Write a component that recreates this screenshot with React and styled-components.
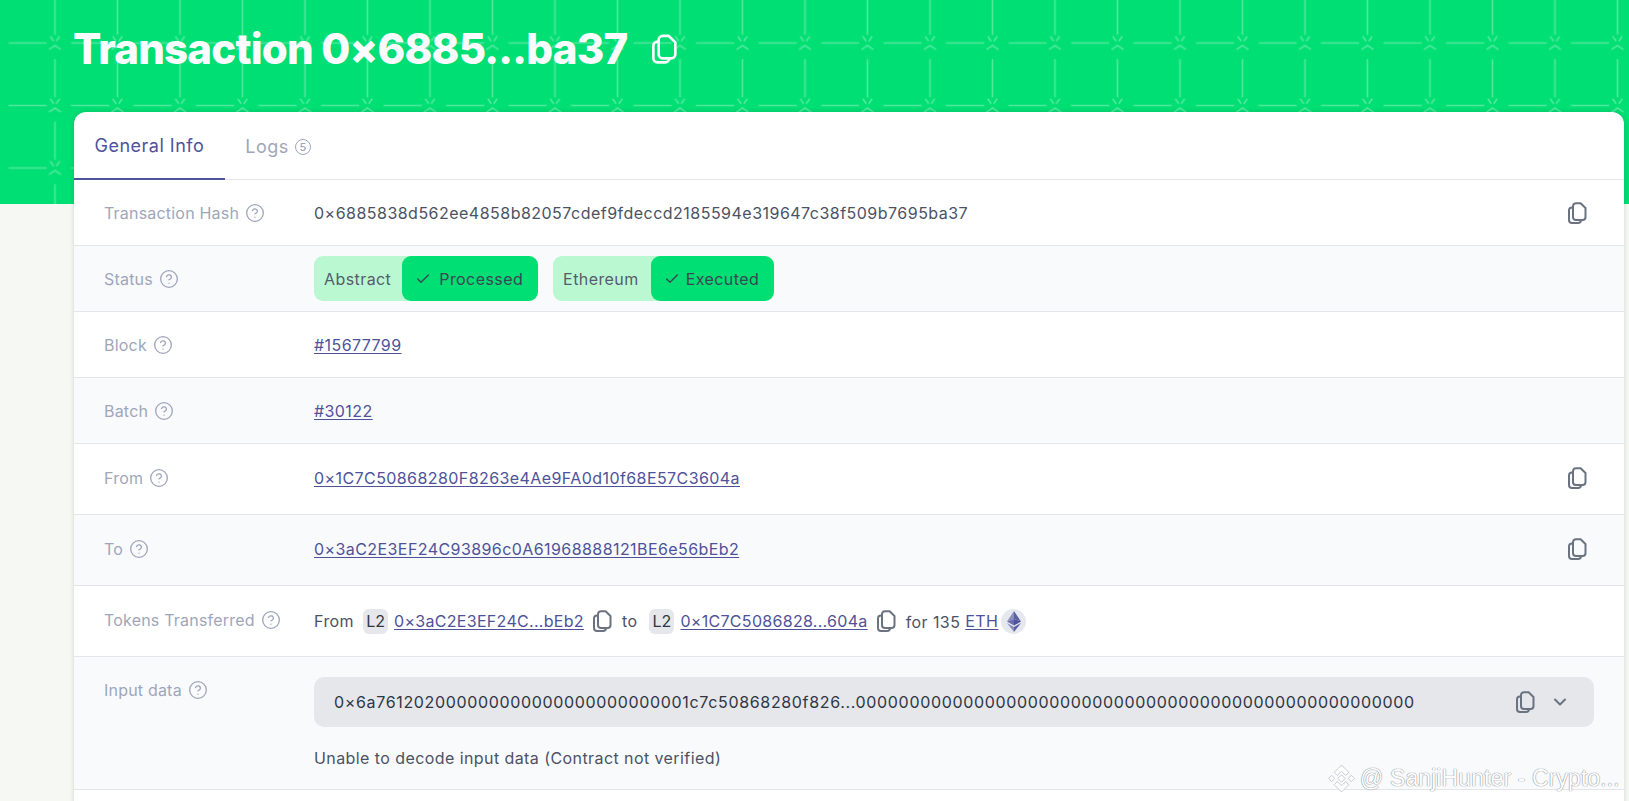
import React from "react";
import styled, { createGlobalStyle } from "styled-components";
import { CircleHelp, Check, ChevronDown } from "lucide-react";

const Global = createGlobalStyle`
  html, body { margin: 0; padding: 0; height: 100%; overflow: hidden; background: #f6f9f3; }
  body { font-family: Inter, "Noto Sans", sans-serif; }
  * { box-sizing: border-box; }
`;

const Page = styled.div`
  position: relative;
  height: 801px;
  overflow: hidden;
`;
const Hero = styled.header`
  position: relative;
  height: 204px;
  background: #00df73;
  padding: 21px 0 0 73px;
`;
const PatternLayer = styled.svg`
  position: absolute;
  inset: 0;
  width: 100%;
  height: 100%;
`;
const TitleRow = styled.div`
  position: relative;
  display: flex;
  align-items: center;
  gap: 21px;
  height: 56px;
`;
const Title = styled.h1`
  margin: 0;
  font-size: 42px;
  line-height: 56px;
  font-weight: 800;
  letter-spacing: -0.8px;
  color: #fbfbff;
`;
const Card = styled.main`
  position: relative;
  min-height: 700px;
  margin: -92px 5px 0 74px;
  background: #fff;
  border-radius: 12px 12px 0 0;
  box-shadow: 0 0 4px rgba(60, 70, 80, 0.22);
  color: #4b5263;
  font-size: 16px;
  letter-spacing: 0.42px;
`;
const Tabs = styled.nav`
  display: flex;
  height: 68px;
  border-bottom: 1px solid #e3e5e9;
`;
const Tab = styled.div`
  display: flex;
  align-items: center;
  gap: 6px;
  height: 68px;
  padding: 0 20.5px;
  font-size: 18px;
  letter-spacing: 0.5px;
  color: ${p => (p.$active ? "#4e529a" : "#a0a6ba")};
  border-bottom: ${p => (p.$active ? "2px solid #4e529a" : "none")};
`;
const Badge = styled.span`
  display: inline-flex;
  align-items: center;
  justify-content: center;
  width: 16px;
  height: 16px;
  margin-top: 1px;
  border: 1.5px solid #a0a6ba;
  border-radius: 50%;
  font-size: 11px;
  font-weight: 500;
  letter-spacing: 0;
`;
const Row = styled.div`
  display: grid;
  grid-template-columns: 240px 1fr auto;
  align-items: ${p => (p.$top ? "start" : "center")};
  height: ${p => p.$h || 66}px;
  padding: ${p => (p.$top ? "20px 0 0" : p.$h ? "0 0 3px" : "0")};
  background: ${p => (p.$alt ? "#f9fafc" : "#fff")};
  border-bottom: 1px solid #e3e5e9;
`;
const Label = styled.div`
  display: flex;
  align-items: center;
  gap: 6px;
  padding-left: 30px;
  margin-top: ${p => p.$drop || 0}px;
  color: #a0a6ba;
  line-height: 24px;
  letter-spacing: 0.2px;
`;
const Value = styled.div`
  display: flex;
  align-items: center;
  min-width: 0;
  color: #4b5263;
  letter-spacing: ${p => (p.$hash ? "0.48px" : "inherit")};
  margin-top: ${p => p.$drop || 0}px;
`;
const Link = styled.a`
  color: #4e529a;
  text-decoration: underline;
  text-underline-offset: 2px;
  letter-spacing: ${p => (p.$tight ? "0.3px" : "inherit")};
`;
const CopyBtn = styled.span`
  display: inline-flex;
  color: ${p => (p.$light ? "#fbfbff" : "#6b7280")};
  margin: 0 ${p => p.$mr || 0}px 0 ${p => p.$ml || 0}px;
`;
const Status = styled.div`
  display: flex;
  height: 45px;
  margin-right: 15px;
  border-radius: 9px;
  background: #baf8d2;
  color: #555c6d;
  align-items: center;
  padding-left: 10px;
`;
const StatusInner = styled.div`
  display: flex;
  align-items: center;
  height: 45px;
  margin-left: ${p => p.$ml}px;
  padding: 0 15px 0 13px;
  gap: ${p => p.$gap}px;
  background: #00df73;
  border-radius: 9px;
  color: #3d4453;
`;
const Layer = styled.span`
  display: inline-flex;
  align-items: center;
  justify-content: center;
  width: 25px;
  height: 25px;
  margin: 0 6px 0 ${p => p.$ml}px;
  background: #e5e7eb;
  border-radius: 6px;
  color: #2f3644;
  letter-spacing: 0;
`;
const Word = styled.span`
  margin: ${p => p.$m || "0"};
`;
const EthCoin = styled.span`
  display: inline-flex;
  align-items: center;
  justify-content: center;
  width: 25px;
  height: 25px;
  margin-left: 3px;
  border-radius: 50%;
  background: #e6e8ef;
`;
const InputColumn = styled.div`
  display: flex;
  flex-direction: column;
  margin-right: 30px;
`;
const InputBox = styled.div`
  display: flex;
  align-items: center;
  justify-content: space-between;
  height: 50px;
  padding: 0 24px 0 20px;
  background: #e5e7eb;
  border-radius: 10px;
  color: #2f3644;
  letter-spacing: 0.66px;
`;
const InputIcons = styled.div`
  display: flex;
  align-items: center;
  gap: 13px;
  color: #6b7280;
`;
const Note = styled.p`
  margin: 19px 0 0;
  line-height: 24px;
  color: #4b5263;
`;
const Watermark = styled.div`
  position: absolute;
  left: 1327px;
  top: 764px;
  display: flex;
  align-items: center;
  gap: 4px;
  font-family: "Liberation Sans", sans-serif;
  font-size: 23px;
  letter-spacing: 0.1px;
  color: #fff;
  text-shadow: 0 0 1px #70757f, 0 0 1px #9a9ea6;
  white-space: nowrap;
`;

const Copy = ({ size = 24, sw = 2 }) => (
  <svg width={size} height={size} viewBox="0 0 24 24" fill="none" stroke="currentColor" strokeWidth={sw} strokeLinecap="round" strokeLinejoin="round">
    <path d="M8 5.2a3 3 0 0 1 3-3h4.6L20.5 7v9a3 3 0 0 1-3 3H11a3 3 0 0 1-3-3z" />
    <path d="M8 6.5H7a3 3 0 0 0-3 3V19a3 3 0 0 0 3 3h6a3 3 0 0 0 3-3" />
  </svg>
);
const Help = () => <CircleHelp size={20} strokeWidth={1.6} color="#a0a6ba" />;

const Pattern = () => (
  <PatternLayer aria-hidden="true">
    <defs>
      <pattern id="grid" x="23.75" y="11.75" width="62.5" height="62.5" patternUnits="userSpaceOnUse">
        <g stroke="#4ee89d" strokeWidth="1.6" fill="none">
          <path d="M47.25 31.25H62.5M0 31.25H23" />
          <path d="M31.25 47.25V62.5M31.25 0V23" />
          <path d="M26.5 24.5L30 29.5M36 24.5L32.5 29.5" />
          <path d="M25.25 37.75L31.25 33.75L37.25 37.75" />
        </g>
      </pattern>
    </defs>
    <rect width="100%" height="100%" fill="url(#grid)" />
  </PatternLayer>
);

const Eth = () => (
  <svg width="14" height="21" viewBox="0 0 14 21">
    <path d="M7 0L0 10.6 7 8z" fill="#8a8ebd" />
    <path d="M7 0l7 10.6L7 8z" fill="#5c60a3" />
    <path d="M0 10.6L7 14.6V8z" fill="#6a6eab" />
    <path d="M14 10.6L7 14.6V8z" fill="#4e529a" />
    <path d="M0 12L7 21v-5z" fill="#8a8ebd" />
    <path d="M14 12L7 21v-5z" fill="#5c60a3" />
  </svg>
);

const BinanceMark = () => (
  <svg width="29" height="29" viewBox="0 0 28 28" fill="#fff" stroke="#b5b8bd" strokeWidth="0.7">
    <path d="M14 1L21 8L18 11L14 7L10 11L7 8z" />
    <path d="M14 27L21 20L18 17L14 21L10 17L7 20z" />
    <path d="M4.5 11L7.5 14L4.5 17L1.5 14z" />
    <path d="M23.5 11L26.5 14L23.5 17L20.5 14z" />
    <path d="M14 10.5L17.5 14L14 17.5L10.5 14z" />
  </svg>
);

export default function App() {
  return (
    <Page>
      <Global />
      <Hero>
        <Pattern />
        <TitleRow>
          <Title>Transaction 0×6885...ba37</Title>
          <CopyBtn $light>
            <Copy size={32} />
          </CopyBtn>
        </TitleRow>
      </Hero>
      <Card>
        <Tabs>
          <Tab $active>General Info</Tab>
          <Tab>
            Logs <Badge>5</Badge>
          </Tab>
        </Tabs>
        <Row>
          <Label>Transaction Hash <Help /></Label>
          <Value $hash>0×6885838d562ee4858b82057cdef9fdeccd2185594e319647c38f509b7695ba37</Value>
          <CopyBtn $mr={35}><Copy /></CopyBtn>
        </Row>
        <Row $alt>
          <Label>Status <Help /></Label>
          <Value>
            <Status>
              Abstract
              <StatusInner $ml={11} $gap={8}><Check size={16} strokeWidth={2} />Processed</StatusInner>
            </Status>
            <Status>
              Ethereum
              <StatusInner $ml={12} $gap={6}><Check size={16} strokeWidth={2} />Executed</StatusInner>
            </Status>
          </Value>
        </Row>
        <Row>
          <Label>Block <Help /></Label>
          <Value><Link>#15677799</Link></Value>
        </Row>
        <Row $alt>
          <Label>Batch <Help /></Label>
          <Value><Link>#30122</Link></Value>
        </Row>
        <Row $h={71}>
          <Label>From <Help /></Label>
          <Value><Link>0×1C7C50868280F8263e4Ae9FA0d10f68E57C3604a</Link></Value>
          <CopyBtn $mr={35}><Copy /></CopyBtn>
        </Row>
        <Row $alt $h={71}>
          <Label>To <Help /></Label>
          <Value><Link>0×3aC2E3EF24C93896c0A61968888121BE6e56bEb2</Link></Value>
          <CopyBtn $mr={35}><Copy /></CopyBtn>
        </Row>
        <Row $h={71}>
          <Label>Tokens Transferred <Help /></Label>
          <Value $drop={3}>
            <Word>From</Word>
            <Layer $ml={9}>L2</Layer>
            <Link $tight>0×3aC2E3EF24C...bEb2</Link>
            <CopyBtn $ml={6}><Copy /></CopyBtn>
            <Word $m="0 12px 0 8px">to</Word>
            <Layer $ml={0}>L2</Layer>
            <Link $tight>0×1C7C5086828...604a</Link>
            <CopyBtn $ml={6}><Copy /></CopyBtn>
            <Word $m="2px 5px 0 8px">for 135</Word>
            <Link>ETH</Link>
            <EthCoin><Eth /></EthCoin>
          </Value>
        </Row>
        <Row $alt $top $h={133}>
          <Label $drop={1}>Input data <Help /></Label>
          <InputColumn>
            <InputBox>
              <span>0×6a761202000000000000000000000001c7c50868280f826...0000000000000000000000000000000000000000000000000000</span>
              <InputIcons>
                <Copy />
                <ChevronDown size={20} strokeWidth={2.4} />
              </InputIcons>
            </InputBox>
            <Note>Unable to decode input data (Contract not verified)</Note>
          </InputColumn>
        </Row>
      </Card>
      <Watermark>
        <BinanceMark />
        <span>@ SanjiHunter - Crypto...</span>
      </Watermark>
    </Page>
  );
}
